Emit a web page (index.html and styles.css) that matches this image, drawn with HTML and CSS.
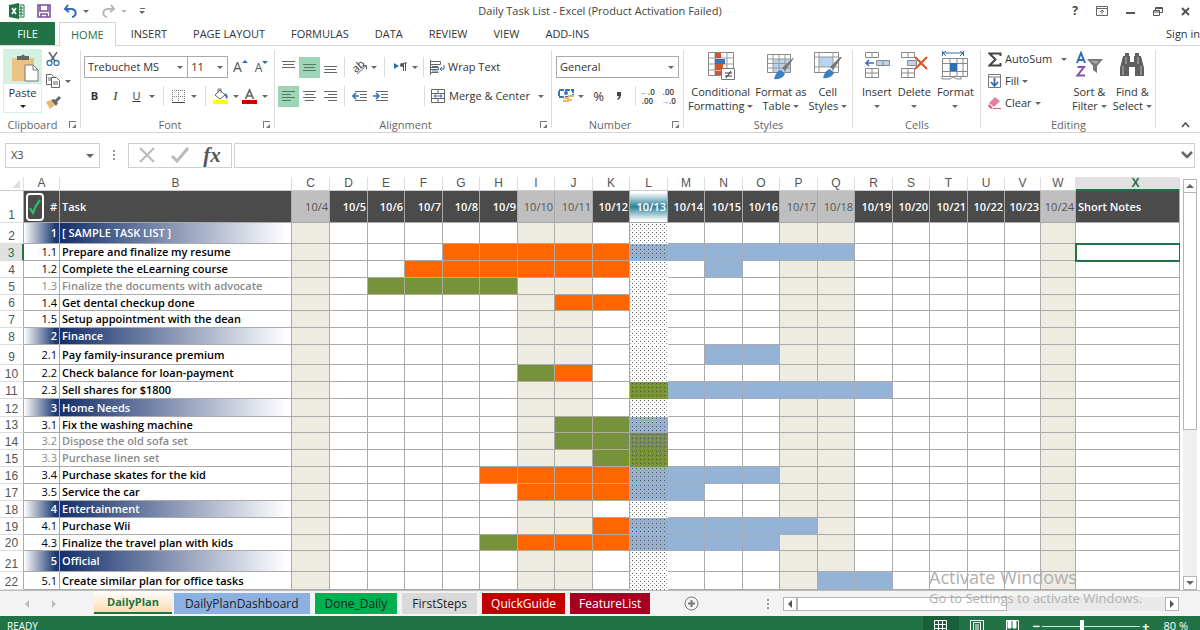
FILE: index.html
```html
<!DOCTYPE html>
<html lang="en">
<head>
<meta charset="utf-8">
<title>Daily Task List - Excel</title>
<link rel="stylesheet" href="styles.css">
</head>
<body>
<header class="titlebar">
  <div class="quick">
    <svg class="logo" width="16" height="16" viewBox="0 0 16 16"><path d="M9 2h6v12H9z" fill="#fff" stroke="#217346"/><path d="M10 5h4M10 8h4M10 11h4M12 3v10" stroke="#217346"/><path d="M0 2l10-2v16L0 14z" fill="#217346"/><path d="M3 5l4 6M7 5l-4 6" stroke="#fff" stroke-width="1.6"/></svg>
    <button class="ib" aria-label="Save"><svg width="14" height="14" viewBox="0 0 14 14" fill="none" stroke="#7b4fa0" stroke-width="1.6"><path d="M1 1h12v12H1zM3 1v6h8V1M4 13V10h6v3"/></svg></button>
    <button class="ib undo" aria-label="Undo"><svg width="15" height="14" viewBox="0 0 15 14" fill="none" stroke="#2f6eb5" stroke-width="2"><path d="M5 1L2 5l4 3M2 5h6c6 0 6 7 1 8"/></svg><i class="caret"></i></button>
    <button class="ib redo" aria-label="Redo"><svg width="15" height="14" viewBox="0 0 15 14" fill="none" stroke="#b8b8b8" stroke-width="2"><path d="M10 1l3 4-4 3M13 5H7C1 5 1 12 6 13"/></svg><i class="caret pale"></i></button>
    <button class="ib more" aria-label="Customize"><i class="dash"></i><i class="caret"></i></button>
  </div>
  <h1>Daily Task List - Excel (Product Activation Failed)</h1>
  <div class="winctl">
    <button aria-label="Help"><b>?</b></button>
    <button aria-label="Ribbon options"><svg width="12" height="10" viewBox="0 0 12 10" fill="none" stroke="#666"><path d="M.5.5h11v9H.5zM.5 2.500h11M6 8V4M4 6l2-2 2 2"/></svg></button>
    <button aria-label="Minimize"><svg width="9" height="10" viewBox="0 0 9 10"><path d="M0 7h9" stroke="#555" stroke-width="2"/></svg></button>
    <button aria-label="Restore"><svg width="10" height="9" viewBox="0 0 10 9" fill="none" stroke="#555"><path d="M.5 3.500h6v5h-6zM.5 5h6M2.500 3V.5h7v5H7M2.500 1.500h7"/></svg></button>
    <button aria-label="Close"><svg width="9" height="9" viewBox="0 0 9 9"><path d="M1 1l7 7M8 1L1 8" stroke="#555" stroke-width="2"/></svg></button>
  </div>
</header>
<nav class="tabs">
  <button class="file">FILE</button>
  <button class="home">HOME</button>
  <button>INSERT</button><button>PAGE LAYOUT</button><button>FORMULAS</button><button>DATA</button><button>REVIEW</button><button>VIEW</button><button>ADD-INS</button>
  <a class="signin" href="#">Sign in</a>
</nav>

<section class="ribbon">
  <div class="group clip">
    <div class="gbody row">
      <button class="paste"><span class="pic"><svg width="28" height="28" viewBox="0 0 28 28"><path d="M1 4h22v23H1z" fill="#eac282"/><path d="M6 6V2h4q2-3 4 0h4v4z" fill="#666"/><path d="M14 11h8l5 5v11H14z" fill="#fff" stroke="#777"/><path d="M22 11v5h5" fill="none" stroke="#777"/></svg></span><span>Paste</span><i class="caret dark"></i></button>
      <div class="stack">
        <button class="ib" aria-label="Cut"><svg width="14" height="14" viewBox="0 0 14 14" fill="none"><path d="M3 0l6 9M11 0L5 9" stroke="#666" stroke-width="1.6"/><circle cx="3.500" cy="11" r="2.500" stroke="#3b74b5" stroke-width="1.300"/><circle cx="10.500" cy="11" r="2.500" stroke="#3b74b5" stroke-width="1.300"/></svg></button>
        <button class="ib" aria-label="Copy"><svg width="14" height="14" viewBox="0 0 14 14" fill="#fff" stroke="#666"><path d="M.5.5h5l2 2v8h-7zM2 4h3M2 6h3"/><path d="M5.500 3.500h5l3 3v7h-8zM7 8h5M7 10h5"/></svg><i class="caret"></i></button>
        <button class="ib" aria-label="Format Painter"><svg width="15" height="13" viewBox="0 0 15 13"><path d="M0 6l5-2 4 5-5 4z" fill="#eab66a"/><path d="M5 4l3-1 4 4-2 3zM9 4l4-4 2 2-4 4z" fill="#666"/></svg></button>
      </div>
    </div>
    <div class="glabel">Clipboard<i class="launch"></i></div>
  </div>

  <div class="group font">
    <div class="gbody">
      <div class="row">
        <label class="sel name"><select aria-label="Font"><option>Trebuchet MS</option></select></label>
        <label class="sel size"><select aria-label="Font size"><option>11</option></select></label>
        <button class="t grow" aria-label="Increase font size">A<i class="up"></i></button>
        <button class="t shrink" aria-label="Decrease font size">A<i class="caret"></i></button>
      </div>
      <div class="row">
        <button class="t"><b>B</b></button><button class="t ital">I</button><button class="t und"><u>U</u></button><i class="caret"></i><i class="sep"></i>
        <button class="t" aria-label="Borders"><svg width="13" height="13" viewBox="0 0 13 13"><path d="M.5 0v12M6.500 0v12M12.500 0v12M0 .5h13M0 6.500h13" stroke="#777" stroke-dasharray="1 1"/><path d="M0 12.500h13" stroke="#444"/></svg></button><i class="caret"></i><i class="sep"></i>
        <button class="t" aria-label="Fill color"><svg width="16" height="16" viewBox="0 0 16 16"><path d="M7 2l5 5-5 4-5-4z" fill="#fff" stroke="#666"/><path d="M5 5V1h3v4" fill="none" stroke="#777"/><path d="M12 5q4 2 2 6-2-1-2-6" fill="#2f6eb5"/><path d="M0 12h15v4H0z" fill="#ff0"/></svg></button><i class="caret"></i>
        <button class="t" aria-label="Font color"><svg width="15" height="16" viewBox="0 0 15 16"><path d="M3.500 11l4-9 4 9M5 8h5" fill="none" stroke="#666" stroke-width="1.700"/><path d="M0 12h15v4H0z" fill="#d00000"/></svg></button><i class="caret"></i>
      </div>
    </div>
    <div class="glabel">Font<i class="launch"></i></div>
  </div>

  <div class="group align">
    <div class="gbody">
      <div class="row">
        <button class="t" aria-label="Top align"><svg width="13" height="16" viewBox="0 0 13 16" stroke="#666"><path d="M0 2.500h13M1 5.500h11M0 8.500h13"/></svg></button>
        <button class="t on" aria-label="Middle align"><svg width="13" height="16" viewBox="0 0 13 16" stroke="#567b68"><path d="M0 5.500h13M1 8.500h11M0 11.500h13"/></svg></button>
        <button class="t" aria-label="Bottom align"><svg width="13" height="16" viewBox="0 0 13 16" stroke="#666"><path d="M0 7.500h13M1 10.500h11M0 13.500h13"/></svg></button>
        <i class="sep"></i>
        <button class="t wide" aria-label="Orientation"><svg class="open" width="17" height="16" viewBox="0 0 17 16"><text x="0" y="12" font-family="Open Sans" font-size="11" fill="#333" transform="rotate(-40 5 8)">ab</text><path d="M5 15l9-8M10.500 6.500h4v4" fill="none" stroke="#666"/></svg></button><i class="caret"></i><i class="sep second"></i>
        <button class="t wide" aria-label="Text direction"><svg width="14" height="10" viewBox="0 0 14 10"><path d="M0 1l5 3-5 3z" fill="#2f6eb5"/><path d="M9.500 9V1H13M11.500 1v8" fill="none" stroke="#555"/><circle cx="8" cy="3" r="2" fill="#555"/></svg></button><i class="caret"></i><i class="sep last"></i>
        <button class="cmd"><svg width="15" height="15" viewBox="0 0 15 15" fill="none" stroke="#666"><path d="M.5 0v15M.5 1.500h10v3H.5M.5 7.500h8v2h-8M.5 12.500h8" /><path d="M2 6.500h6M2 11h6" stroke="#3b74b5"/><path d="M14 5v4h-4M12 7l-2 2 2 2" stroke="#2f6eb5"/></svg>Wrap Text</button>
      </div>
      <div class="row">
        <button class="t on" aria-label="Align left"><svg width="13" height="13" viewBox="0 0 13 13" stroke="#567b68"><path d="M0 1.500h13M0 4.500h9M0 7.500h13M0 10.500h9"/></svg></button>
        <button class="t" aria-label="Center"><svg width="13" height="13" viewBox="0 0 13 13" stroke="#666"><path d="M0 1.500h13M2 4.500h9M0 7.500h13M2 10.500h9"/></svg></button>
        <button class="t" aria-label="Align right"><svg width="13" height="13" viewBox="0 0 13 13" stroke="#666"><path d="M0 1.500h13M4 4.500h9M0 7.500h13M4 10.500h9"/></svg></button>
        <i class="sep"></i>
        <button class="t" aria-label="Decrease indent"><svg width="15" height="12" viewBox="0 0 15 12" stroke="#666" fill="none"><path d="M3 1.500h12M8 4.500h7M8 7.500h7M3 10.500h12"/><path d="M7 6H1M4 3L1 6l3 3" stroke="#2f6eb5" stroke-width="1.600"/></svg></button>
        <button class="t" aria-label="Increase indent"><svg width="15" height="12" viewBox="0 0 15 12" stroke="#666" fill="none"><path d="M3 1.500h12M8 4.500h7M8 7.500h7M3 10.500h12"/><path d="M0 6h6M3 3l3 3-3 3" stroke="#2f6eb5" stroke-width="1.600"/></svg></button>
        <i class="sep merge"></i>
        <button class="cmd"><svg width="15" height="15" viewBox="0 0 15 15" fill="none" stroke="#666"><path d="M.5.5h13v13H.5zM.5 4.500h13M.5 9.500h13M7 0v4M7 10v4"/><path d="M3 7h8M5 5.500L3 7l2 1.500M9 5.500L11 7 9 8.500" stroke="#3b74b5"/></svg>Merge &amp; Center<i class="caret"></i></button>
      </div>
    </div>
    <div class="glabel">Alignment<i class="launch"></i></div>
  </div>

  <div class="group number">
    <div class="gbody">
      <div class="row"><label class="sel fmt"><select aria-label="Number format"><option>General</option></select></label></div>
      <div class="row">
        <button class="t" aria-label="Currency"><svg width="16" height="16" viewBox="0 0 16 16"><path d="M1 2h14v7H1z" fill="#fff" stroke="#3b74b5" stroke-width="2" stroke-dasharray="5 1"/><circle cx="8" cy="5" r="2" fill="#3b74b5"/><path d="M5 9h11v6H5z" fill="#fff"/><path d="M5 10h6M5 13h6M10 8h6M9 12h5" stroke="#eab66a" stroke-width="2"/></svg></button><i class="caret"></i>
        <button class="t pct">%</button><button class="t comma" aria-label="Comma style"><svg width="5" height="8" viewBox="0 0 5 8"><path d="M0 0h4v3q0 3-3 5l-1-1q2-1 2-3H0z" fill="#444"/></svg></button><i class="sep"></i>
        <button class="t dec" aria-label="Increase decimal"><span><em>←</em>.0</span><span>.00</span></button>
        <button class="t dec" aria-label="Decrease decimal"><span>.00</span><span><em>→</em>.0</span></button>
      </div>
    </div>
    <div class="glabel">Number<i class="launch"></i></div>
  </div>

  <div class="group styles">
    <div class="gbody row">
      <button class="big"><svg width="28" height="30" viewBox="0 0 28 30"><path d="M1.500 1.500h25v23h-25z" fill="#fff" stroke="#888"/><path d="M1 7h26M1 13h26M1 19h26M8 1v24M20 1v24" stroke="#999"/><path d="M8 2h6v5H8zM8 13h8v6H8zM8 20h6v4H8z" fill="#d0532f"/><path d="M8 8h10v5H8z" fill="#3b74b5"/><path d="M14.500 17.500h13v11h-13z" fill="#fff" stroke="#777"/><path d="M18 22h7M18 25h7M24 20l-5 7" stroke="#333"/></svg><span>Conditional<br>Formatting <i class="caret"></i></span></button>
      <button class="big"><svg width="28" height="30" viewBox="0 0 28 30"><path d="M.5 3.500h23v18H.5z" fill="#fff" stroke="#888"/><path d="M6 8h17v13H6z" fill="#bcd3ee"/><path d="M0 8h24M0 12.500h24M0 17h24M6 3v19M12 3v19M18 3v19" stroke="#999"/><path d="M27 7l-9 13-3-3L26 7z" fill="#777"/><path d="M7 28q2-8 7-9l4 4q-3 6-11 5" fill="#3b7fc4"/></svg><span>Format as<br>Table <i class="caret"></i></span></button>
      <button class="big"><svg width="28" height="30" viewBox="0 0 28 30"><path d="M.5 1.500h24v20H.5z" fill="#fff" stroke="#888"/><path d="M5 6h14v10H5z" fill="#bcd3ee"/><path d="M0 6h25M0 16h25M5 1v20M19 1v20" stroke="#999"/><path d="M28 6l-9 13-3-3L26 6z" fill="#777"/><path d="M9 27q2-8 7-9l4 4q-3 6-11 5" fill="#3b7fc4"/></svg><span>Cell<br>Styles <i class="caret"></i></span></button>
    </div>
    <div class="glabel">Styles</div>
  </div>

  <div class="group cells">
    <div class="gbody row">
      <button class="big"><svg width="26" height="30" viewBox="0 0 26 30" fill="#fff" stroke="#888"><path d="M1.500 1.500h13v5h-13zM8 1v5M1.500 17.500h13v9h-13zM8 17v10M1 22h14"/><path d="M12.500 9.500h13v5h-13z" fill="#bcd3ee"/><path d="M19 9v6"/><path d="M10 12H2M5 9l-3 3 3 3" fill="none" stroke="#2f6eb5" stroke-width="1.500"/></svg><span>Insert<br><i class="caret"></i></span></button>
      <button class="big"><svg width="28" height="30" viewBox="0 0 28 30" fill="#fff" stroke="#888"><path d="M1.500 1.500h13v5h-13zM8 1v5M1.500 17.500h13v9h-13zM8 17v10M1 22h14"/><path d="M7.500 9.500h9v5h-9z" fill="#bcd3ee"/><path d="M15 6l12 12M27 6L15 18" stroke="#d9562d" stroke-width="2.200"/></svg><span>Delete<br><i class="caret"></i></span></button>
      <button class="big"><svg width="28" height="30" viewBox="0 0 28 30" fill="none"><path d="M2 2h21M1.500 0v5M22.500 0v5M5 0L2 2l3 3M19 0l3 2-3 3" stroke="#2f6eb5"/><path d="M1.500 7.500h25v18h-25zM1 12.500h26M1 20.500h26M9 7v18M16 7v18M22 7v18M1 25v3h8l3-2 4 2h4v-3" stroke="#888"/><path d="M9 12h7v8H9z" fill="#2f6eb5"/></svg><span>Format<br><i class="caret"></i></span></button>
    </div>
    <div class="glabel">Cells</div>
  </div>

  <div class="group editing">
    <div class="gbody row">
      <div class="stack">
        <button class="cmd"><svg width="14" height="15" viewBox="0 0 14 15"><path d="M12.500 4V1.500h-11l6 6-6 6h11V11" fill="none" stroke="#444" stroke-width="2"/></svg>AutoSum<i class="caret far"></i></button>
        <button class="cmd"><svg width="14" height="14" viewBox="0 0 14 14" fill="none"><path d="M.5.5h12v13H.5zM.5 3h12" stroke="#777"/><path d="M6.500 4v8M3 8l3.500 4L10 8" stroke="#2f6eb5" stroke-width="1.800"/></svg>Fill<i class="caret"></i></button>
        <button class="cmd"><svg width="14" height="14" viewBox="0 0 14 14"><path d="M7 1l5 4-6 6-5-4z" fill="#e5819a"/><path d="M1 8l4 4-2 1-3-3z" fill="#d25e7c"/><path d="M5 12.500h8" stroke="#d25e7c"/></svg>Clear<i class="caret"></i></button>
      </div>
      <button class="big"><svg width="28" height="30" viewBox="0 0 28 30" fill="none"><path d="M2 12L6 2l4 10M3.500 9h5" stroke="#2f6eb5" stroke-width="2"/><path d="M2.500 16H9l-6.500 8.500H10" stroke="#8a4fb0" stroke-width="2"/><path d="M12 8h16l-6 7v7l-4-3v-4z" fill="#777"/><path d="M15 10h9l-3 3z" fill="#aaa"/></svg><span>Sort &amp;<br>Filter <i class="caret"></i></span></button>
      <button class="big"><svg width="26" height="30" viewBox="0 0 26 30" fill="#5f5f5f"><path d="M6 2h4v3h1v6h4V5h1V2h4v3h2l3 12v8h-9v-9h-6v9H1v-8L4 5h2z"/><path d="M4 15v9M7 6v7M19 6v7M22 15v9" stroke="#bbb"/></svg><span>Find &amp;<br>Select <i class="caret"></i></span></button>
    </div>
    <div class="glabel">Editing</div>
  </div>
  <button class="collapse" aria-label="Collapse ribbon"><svg width="9" height="6" viewBox="0 0 9 6"><path d="M1 5l3.500-4L8 5" fill="none" stroke="#555" stroke-width="1.700"/></svg></button>
</section>

<section class="fbar">
  <label class="sel cellname"><select aria-label="Name box"><option>X3</option></select></label>
  <i class="vdots"></i>
  <div class="fbtns">
    <button aria-label="Cancel"><svg width="17" height="16" viewBox="0 0 17 16"><path d="M1 1l14 14M15 1L1 15" stroke="#bbb" stroke-width="2.200"/></svg></button>
    <button aria-label="Enter"><svg width="18" height="16" viewBox="0 0 18 16"><path d="M1 9l5 5L17 1" fill="none" stroke="#bbb" stroke-width="3"/></svg></button>
    <button class="fx" aria-label="Insert function">fx</button>
  </div>
  <div class="formula"><input type="text" aria-label="Formula"><svg width="12" height="8" viewBox="0 0 12 8"><path d="M1 1l5 5 5-5" fill="none" stroke="#666" stroke-width="2.500"/></svg></div>
</section>

<main class="sheet">
  <table id="grid"></table>
  <div class="vscroll"><button aria-label="Scroll up"><i class="tri up"></i></button><div class="thumb"></div><button class="end" aria-label="Scroll down"><i class="tri down"></i></button></div>
</main>

<footer class="sheettabs">
  <div class="navs"><i class="tri left pale"></i><i class="tri right pale"></i></div>
  <button class="active">DailyPlan</button>
  <button class="blue">DailyPlanDashboard</button>
  <button class="green">Done_Daily</button>
  <button class="gray">FirstSteps</button>
  <button class="red">QuickGuide</button>
  <button class="crimson">FeatureList</button>
  <button class="plus" aria-label="New sheet"><svg width="15" height="15" viewBox="0 0 15 15" fill="none" stroke="#777"><circle cx="7.500" cy="7.500" r="6.500"/><path d="M4 7.500h7M7.500 4v7" stroke-width="2"/></svg></button>
  <i class="vdots"></i>
  <div class="hscroll"><button aria-label="Scroll left"><i class="tri left"></i></button><div class="thumb"></div><button class="end" aria-label="Scroll right"><i class="tri right"></i></button></div>
  <div class="watermark"><strong>Activate Windows</strong><span>Go to Settings to activate Windows.</span></div>
</footer>
<footer class="status">
  <span>READY</span>
  <button class="cur" aria-label="Normal view"><svg width="13" height="13" viewBox="0 0 13 13" fill="none" stroke="#fff"><path d="M.5.5h12v12H.5zM0 4.500h13M0 8.500h13M4.500 0v13M8.500 0v13"/></svg></button>
  <button aria-label="Page layout view"><svg width="14" height="13" viewBox="0 0 14 13" fill="none" stroke="#fff"><path d="M.5.5h13v12H.5zM3.500 2.500h7v10h-7zM5 5h4M5 7h4M5 9h4"/></svg></button>
  <button aria-label="Page break view"><svg width="13" height="13" viewBox="0 0 13 13" fill="none" stroke="#fff"><path d="M.5.5h12v12H.5z"/><path d="M2 1v7h3V1zM7 1v7h3V1z" fill="#fff"/></svg></button>
  <div class="zoom"><b>−</b><input type="range" min="0" max="100" value="40" aria-label="Zoom"><b>+</b></div>
  <span class="pctz">80 %</span>
</footer>
<script src="script.js"></script>
</body>
</html>
```
FILE: styles.css
```css
* { box-sizing: border-box; }
body { margin: 0; height: 100vh; overflow: hidden; display: flex; flex-direction: column; background: #fff; color: #444; font: 11px/14px "Open Sans", "Noto Sans", sans-serif; }
body > * { flex: none; }
button, select, input { font: inherit; color: inherit; border: 0; padding: 0; margin: 0; background: none; border-radius: 0; }
svg { display: block; flex: none; }
svg.open { overflow: visible; }
h1 { margin: 0; font: inherit; }
i, em { font-style: normal; }

.caret { display: inline-block; flex: none; border: 3px solid transparent; border-top-color: #666; border-bottom: 0; width: 6px; height: 3px; vertical-align: middle; }
.caret.pale { border-top-color: #bbb; }
.caret.dark { border-top-color: #222; }
.tri { width: 0; height: 0; border: 4px solid transparent; }
.tri.up { border-bottom-color: #666; border-top: 0; }
.tri.down { border-top-color: #666; border-bottom: 0; }
.tri.left { border-right-color: #555; border-left: 0; }
.tri.right { border-left-color: #555; border-right: 0; }
.tri.left.pale { border-right-color: #bbb; }
.tri.right.pale { border-left-color: #bbb; }

.titlebar { display: grid; grid-template-columns: 1fr auto 1fr; align-items: center; height: 22px; }
.quick { display: flex; align-items: center; padding-left: 9px; gap: 12px; height: 18px; }
.ib { display: flex; align-items: center; gap: 5px; }
.more { flex-direction: column; gap: 2px; }
.dash { width: 5px; height: 1px; background: #666; }
.winctl { display: flex; justify-content: flex-end; align-items: center; gap: 18px; padding-right: 10px; height: 18px; font-size: 12px; }

.tabs { display: flex; align-items: flex-end; height: 24px; border-bottom: 1px solid #d4d4d4; color: #333; }
.tabs button { height: 23px; padding: 0 13px; }
.tabs .file { background: #217346; color: #fff; width: 55px; padding: 0; margin-right: 4px; }
.tabs .home { color: #217346; border: 1px solid #d4d4d4; border-bottom: 0; background: #fff; padding: 0 11px; margin: 0 2px -1px 0; height: 24px; }
.signin { margin-left: auto; align-self: center; color: #333; text-decoration: none; }

.ribbon { display: flex; height: 87px; border-bottom: 1px solid #d4d4d4; }
.group { display: flex; flex-direction: column; position: relative; flex: none; }
.group::after { content: ""; position: absolute; right: 0; top: 4px; bottom: 4px; width: 1px; background: #dcdcdc; }
.gbody { height: 71px; padding: 10px 3px 0; }
.gbody > .row { height: 22px; margin-bottom: 7px; }
.row { display: flex; align-items: center; }
.gbody.row { align-items: flex-start; padding-top: 3px; }
.glabel { text-align: center; line-height: 15px; color: #666; position: relative; }
.launch { position: absolute; right: 5px; top: 4px; width: 7px; height: 7px; border-left: 1px solid #777; border-top: 1px solid #777; }
.launch::after { content: ""; position: absolute; right: 0; bottom: 0; border: 2px solid #777; border-left-color: transparent; border-top-color: transparent; }
.clip { width: 81px; }
.clip .glabel, .font .glabel { padding-right: 16px; }
.font { width: 194px; }
.align { width: 277px; }
.align .glabel { padding-right: 16px; }
.number { width: 132px; }
.number .glabel { padding-right: 16px; }
.styles { width: 169px; }
.cells { width: 128px; }
.editing { width: 175px; }
.paste { width: 39px; height: 64px; display: flex; flex-direction: column; align-items: center; border: 1px solid #d3f0e0; margin-right: 4px; color: #333; }
.paste .pic { background: #d3f0e0; align-self: stretch; height: 34px; padding: 4px 0 0 7px; margin-bottom: 2px; }
.paste .caret { margin-top: 5px; }
.stack { display: flex; flex-direction: column; gap: 8px; padding-top: 3px; }

.sel { position: relative; display: block; height: 22px; border: 1px solid #ababab; background: #fff; color: #333; }
.sel select { appearance: none; width: 100%; height: 100%; padding-left: 3px; display: block; }
.sel::after { content: ""; position: absolute; right: 4px; top: 9px; border: 3px solid transparent; border-top-color: #666; border-bottom: 0; }
.sel.name { width: 105px; }
.sel.size { width: 41px; margin-left: -1px; }
.sel.fmt { width: 123px; margin-left: 1px; }
.t { width: 21px; height: 21px; display: flex; align-items: center; justify-content: center; flex: none; color: #333; }
.t.on { background: #9fd5b7; }
.t.wide { width: 22px; }
.t.grow, .t.shrink { font-size: 14px; align-items: flex-start; padding-top: 3px; color: #555; }
.t.grow { margin-left: 2px; }
.t.shrink { font-size: 12px; padding-top: 4px; }
.t.grow .up { border: 3px solid transparent; border-bottom-color: #2f6eb5; border-top: 0; }
.t.shrink .caret { border-top-color: #2f6eb5; }
.ital { font-family: "Liberation Serif", serif; font-style: italic; font-size: 13px; }
.sep { width: 1px; height: 20px; background: #dcdcdc; margin: 0 4px 0 8px; flex: none; }
.font .t + .caret { margin-left: 2px; }
.align .sep { margin: 0 4px 0 3px; }
.align .sep.second { margin: 0 5px 0 7px; }
.align .sep.last { margin: 0 6px 0 5px; }
.align .sep.merge { margin: 0 6px 0 33px; }
.align .wide + .caret { margin-left: 0; }
.cmd { display: flex; align-items: center; gap: 3px; color: #333; white-space: nowrap; }
.cmd .caret { margin-left: 5px; }
.pct { font-size: 13px; }
.number .caret { margin: 0 4px 0 2px; }
.number .sep { margin: 0 1px 0 5px; }
.dec { flex-direction: column; font-size: 8px; line-height: 9px; font-weight: 600; }
.dec em { color: #2f6eb5; }
.big { display: flex; flex-direction: column; align-items: center; color: #333; line-height: 14px; padding-top: 2px; gap: 4px; white-space: nowrap; }
.big .caret { margin-bottom: 2px; }
.styles .gbody { justify-content: space-between; padding: 3px 6px 0 4px; }
.cells .gbody { justify-content: space-between; padding: 3px 7px 0 9px; }
.editing .gbody { padding-left: 7px; gap: 6px; }
.editing .stack { width: 78px; }
.editing .cmd { height: 14px; }
.editing .cmd .caret { margin-left: 0; }
.editing .cmd .caret.far { margin-left: 6px; }
.collapse { margin: auto 10px 4px auto; }

.fbar { display: flex; align-items: center; padding: 9px 5px 9px; height: 44px; }
.cellname { width: 95px; height: 25px; border-color: #d0d0d0; color: #444; }
.cellname select { padding-left: 5px; }
.cellname::after { top: 10px; right: 5px; border-width: 4px 4px 0; }
.vdots { width: 2px; height: 10px; margin: 0 13px; background: repeating-linear-gradient(#999 0 2px, transparent 2px 4px); }
.fbtns { width: 104px; height: 25px; border: 1px solid #d0d0d0; display: flex; align-items: center; justify-content: space-around; padding: 0 3px; }
.fx { font: italic bold 21px/22px "Liberation Serif", serif; color: #555; }
.formula { flex: 1; height: 25px; border: 1px solid #d0d0d0; margin-left: 2px; display: flex; align-items: center; padding-right: 1px; }
.formula input { flex: 1; height: 100%; padding: 0 6px; }

.sheet { display: flex; height: 413px; overflow: hidden; }
table { flex: 1; width: 0; table-layout: fixed; border-collapse: separate; border-spacing: 0; color: #000; font: 600 11px/14px "Open Sans", sans-serif; }
th, td { padding: 0; height: 16px; border-right: 1px solid #aaa; border-bottom: 1px solid #aaa; overflow: hidden; white-space: nowrap; font-weight: inherit; text-align: left; }
.letters th { height: 14px; border-bottom-color: #ccc; border-right-color: #ddd; font: 12px/13px "Liberation Sans", sans-serif; color: #555; text-align: center; }
.letters .picked { background: #e1e1e1; color: #217346; font-weight: bold; border-bottom: 2px solid #217346; padding-left: 16px; line-height: 12px; }
.letters .corner { position: relative; }
.corner::after { content: ""; position: absolute; right: 3px; bottom: 2px; border: 4px solid #ddd; border-top-color: transparent; border-left-color: transparent; }
.rn { font: 12px/13px "Liberation Sans", sans-serif; color: #555; text-align: center; vertical-align: bottom; border-bottom-color: #ddd; }
.rn.picked { background: #e1e1e1; color: #217346; border-right: 2px solid #217346; }
.idx { text-align: right; padding-right: 2px; font-weight: 500; }
.task { padding-left: 2px; font-weight: 600; }
.done .idx, .done .task { color: #8a8a8a; }
.head td { background: #4b4b4b; color: #fff; font-weight: 600; }
.head .day { text-align: right; padding-right: 1px; }
.head .off { background: #bfbfbf; color: #555; font-weight: 400; }
.head .today { background: linear-gradient(#fff 5%, #2d8299 50%, #fff 95%); }
.headmark { display: flex; align-items: center; justify-content: space-between; padding-left: 2px; }
.box { width: 18px; height: 28px; border: 2px solid #fff; border-radius: 4px; display: flex; align-items: center; justify-content: center; }
.section .idx { background: linear-gradient(90deg, #fff, #1c3971 90%); color: #fff; font-weight: 600; }
.section .task { background: linear-gradient(90deg, #142f6b, #fff 98%); color: #fff; font-weight: 600; }
.off { background: #eeece1; }
.late { background: #ff6600; }
.ok { background: #76933c; }
.plan { background: #95b3d7; }
.late, .ok, .plan { border-color: #b5a99a; }
.plan { border-color: #a3adb8; }
tr:not(.head):not(.letters) .today { border-color: transparent; background-image: conic-gradient(at 1px 1px, transparent 75%, #555 0), conic-gradient(at 1px 1px, transparent 75%, #999 0); background-size: 4px 4px; background-position: 2px 1px, 4px 3px; }
.sel-cell { outline: 2px solid #217346; outline-offset: -1px; }

.vscroll { width: 20px; display: flex; flex-direction: column; padding: 2px 3px 0 3px; background: #fff; }
.vscroll button { height: 14px; border: 1px solid #b5b5b5; display: flex; align-items: center; justify-content: center; background: #fff; }
.vscroll .thumb { height: 237px; border: 1px solid #b5b5b5; border-top: 0; }
.vscroll::after { content: ""; flex: 1; background: #f0f0f0; order: 1; }
.vscroll .end { order: 2; }

.sheettabs { display: flex; align-items: center; height: 26px; background: #f3f3f3; border-top: 1px solid #bbb; position: relative; color: #222; font-size: 12px; }
.sheettabs > button { height: 21px; margin-right: 5px; padding: 0 10px; }
.navs { width: 94px; display: flex; gap: 23px; padding-left: 25px; }
.sheettabs > .active { height: 23px; align-self: flex-start; background: linear-gradient(#fff, #fbdcae); color: #217346; font-size: 11px; font-weight: bold; border-bottom: 2px solid #217346; margin-right: 2px; padding: 0 13px; }
.sheettabs .blue { background: #8db0e2; padding: 0 11px; }
.sheettabs .green { background: #00b050; }
.sheettabs .gray { background: #d9d9d9; }
.sheettabs .red { background: #c00000; color: #fff; padding: 0 9px; }
.sheettabs .crimson { background: #a50021; color: #fff; padding: 0 9px; }
.sheettabs .plus { padding: 0; margin-left: 29px; }
.sheettabs .vdots { margin-left: auto; margin-right: 14px; }
.hscroll { width: 396px; height: 14px; display: flex; background: #e9e9e9; margin-right: 21px; }
.hscroll button { width: 14px; border: 1px solid #b5b5b5; background: #fff; display: flex; align-items: center; justify-content: center; }
.hscroll .thumb { width: 210px; border: 1px solid #b5b5b5; background: #fff; }
.hscroll .end { margin-left: auto; }
.watermark { position: absolute; right: 49px; top: -25px; width: 222px; color: #b0b0b0; display: flex; flex-direction: column; pointer-events: none; white-space: nowrap; }
.watermark strong { font-weight: 400; font-size: 18px; line-height: 22px; }
.watermark span { font-size: 13px; line-height: 20px; }

.status { display: flex; align-items: center; height: 20px; background: #217346; color: #fff; padding: 0 12px 0 7px; font-size: 10px; }
.status span:first-child { margin-right: auto; }
.status button { width: 36px; height: 20px; display: flex; align-items: center; justify-content: center; }
.status .cur { background: #17603a; }
.zoom { display: flex; align-items: center; gap: 2px; margin-left: 2px; margin-right: 14px; font-size: 13px; }
.zoom input { appearance: none; width: 98px; height: 12px; background: linear-gradient(#cfe3d7, #cfe3d7) center / 100% 1px no-repeat; }
.zoom input::-webkit-slider-thumb { appearance: none; width: 4px; height: 12px; background: #fff; }
.pctz { white-space: nowrap; font-size: 11px; }
```
FILE: script.js
```js
const widths = [24, 36, 232, 38, 38, 37, 38, 37, 38, 37, 38, 37, 38, 37, 38, 37, 38, 37, 38, 37, 38, 37, 36, 35];
const weekend = "CIJPQW";
const letters = "CDEFGHIJKLMNOPQRSTUVW".split("");
// [height, number, task, kind, bars as "first-last:type"]
const rows = [
  [21, "1", "[ SAMPLE TASK LIST ]", "section"],
  [17, "1.1", "Prepare and finalize my resume", "", "GK:late LQ:plan"],
  [17, "1.2", "Complete the eLearning course", "", "FK:late NN:plan"],
  [17, "1.3", "Finalize the documents with advocate", "done", "EH:ok"],
  [16, "1.4", "Get dental checkup done", "", "JK:late"],
  [17, "1.5", "Setup appointment with the dean", ""],
  [17, "2", "Finance", "section"],
  [20, "2.1", "Pay family-insurance premium", "", "NO:plan"],
  [17, "2.2", "Check balance for loan-payment", "", "II:ok JJ:late"],
  [17, "2.3", "Sell shares for $1800", "", "LL:ok MR:plan"],
  [18, "3", "Home Needs", "section"],
  [16, "3.1", "Fix the washing machine", "", "JK:ok LL:plan"],
  [17, "3.2", "Dispose the old sofa set", "done", "JL:ok"],
  [17, "3.3", "Purchase linen set", "done", "KL:ok"],
  [17, "3.4", "Purchase skates for the kid", "", "HK:late LO:plan"],
  [17, "3.5", "Service the car", "", "IK:late LM:plan"],
  [17, "4", "Entertainment", "section"],
  [17, "4.1", "Purchase Wii", "", "KK:late LP:plan"],
  [16, "4.3", "Finalize the travel plan with kids", "", "HH:ok IK:late LO:plan"],
  [21, "5", "Official", "section"],
  [18, "5.1", "Create similar plan for office tasks", "", "QR:plan"]
];
const dayClass = c => (weekend.includes(c) ? "off" : "") + (c === "L" ? " today" : "");
let html = "<colgroup>" + widths.map(w => `<col style="width:${w}px">`).join("") + "<col></colgroup>";
html += '<tr class="letters"><th class="corner"></th><th>A</th><th>B</th>' +
  letters.map(c => `<th>${c}</th>`).join("") + '<th class="picked">X</th></tr>';
html += '<tr class="head"><th class="rn" style="height:32px">1</th><td class="idx"><div class="headmark"><span class="box">' +
  '<svg width="12" height="18" viewBox="0 0 12 18"><path d="M1 10l3 5Q6 8 11 2" fill="none" stroke="#2fc46b" stroke-width="2"/></svg></span>#</div></td><td class="task">Task</td>' +
  letters.map((c, i) => `<td class="day ${dayClass(c)}">10/${i + 4}</td>`).join("") + '<td class="task">Short Notes</td></tr>';
rows.forEach(([h, num, task, kind, bars = ""], r) => {
  const spans = bars.split(" ").filter(Boolean);
  const cells = letters.map(c => {
    const bar = spans.find(s => c >= s[0] && c <= s[1]);
    return `<td class="${dayClass(c)} ${bar ? bar.slice(3) : ""}"></td>`;
  }).join("");
  html += `<tr class="${kind}"><th class="rn${r === 1 ? " picked" : ""}" style="height:${h}px">${r + 2}</th>` +
    `<td class="idx">${num}</td><td class="task">${task}</td>${cells}<td class="${r === 1 ? "sel-cell" : ""}"></td></tr>`;
});
document.getElementById("grid").innerHTML = html;
```
